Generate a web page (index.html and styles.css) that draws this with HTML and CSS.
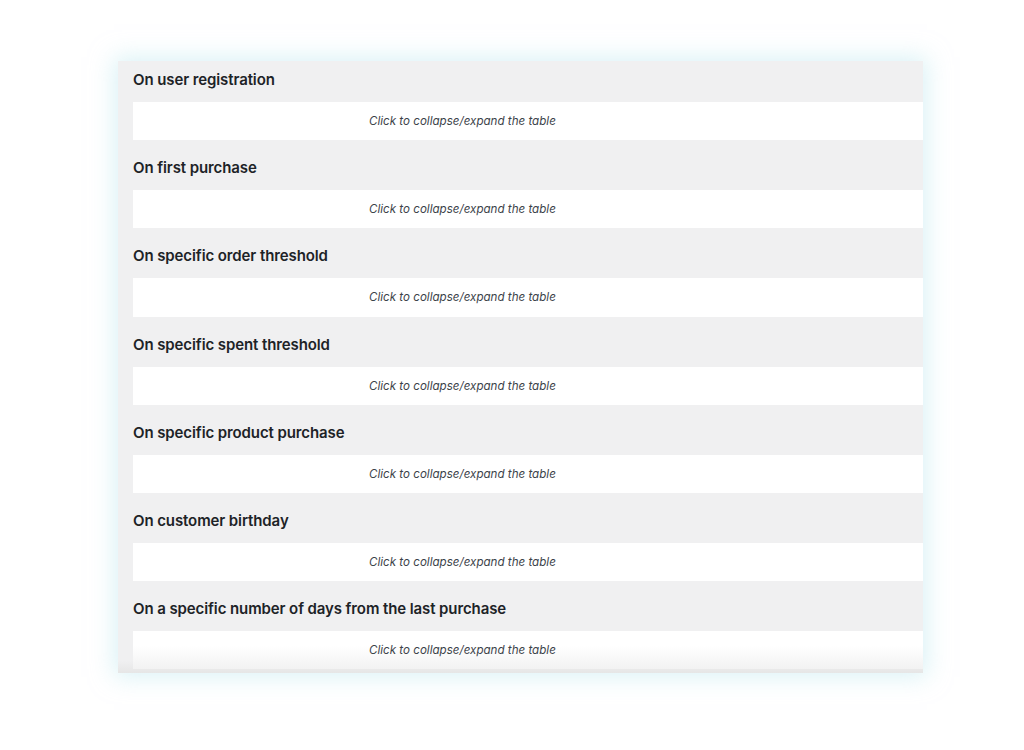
FILE: index.html
```html
<!DOCTYPE html>
<html lang="en">
<head>
<meta charset="utf-8">
<title>Rules</title>
<link rel="stylesheet" href="styles.css">
</head>
<body>
<div class="page">
  <div class="panel">
    <section class="rule">
      <h3 class="rule-title">On user registration</h3>
      <div class="toggle"><span class="toggle-text">Click to collapse/expand the table</span></div>
    </section>
    <section class="rule">
      <h3 class="rule-title">On first purchase</h3>
      <div class="toggle"><span class="toggle-text">Click to collapse/expand the table</span></div>
    </section>
    <section class="rule">
      <h3 class="rule-title">On specific order threshold</h3>
      <div class="toggle"><span class="toggle-text">Click to collapse/expand the table</span></div>
    </section>
    <section class="rule">
      <h3 class="rule-title">On specific spent threshold</h3>
      <div class="toggle"><span class="toggle-text">Click to collapse/expand the table</span></div>
    </section>
    <section class="rule">
      <h3 class="rule-title">On specific product purchase</h3>
      <div class="toggle"><span class="toggle-text">Click to collapse/expand the table</span></div>
    </section>
    <section class="rule">
      <h3 class="rule-title">On customer birthday</h3>
      <div class="toggle"><span class="toggle-text">Click to collapse/expand the table</span></div>
    </section>
    <section class="rule">
      <h3 class="rule-title">On a specific number of days from the last purchase</h3>
      <div class="toggle toggle-last"><span class="toggle-text">Click to collapse/expand the table</span></div>
    </section>
  </div>
</div>
</body>
</html>
```

FILE: styles.css
```css
html, body {
  margin: 0;
  padding: 0;
  background: #ffffff;
}

body {
  font-family: Inter, "Noto Sans", "Liberation Sans", sans-serif;
  width: 1024px;
  height: 750px;
  overflow: hidden;
}

.page {
  padding-top: 61px;
  padding-left: 118px;
}

.panel {
  width: 790px;
  padding-left: 15px;
  padding-bottom: 4px;
  background: linear-gradient(#f0f0f1 0%, #f0f0f1 98%, #e6e6e6 100%);
  box-shadow: 0 0 22px 4px rgba(190, 232, 238, 0.55);
  display: flex;
  flex-direction: column;
  gap: 9px;
}

.rule {
  display: flex;
  flex-direction: column;
}

.rule-title {
  margin: 0;
  height: 41px;
  box-sizing: border-box;
  padding-top: 9px;
  font-size: 15px;
  line-height: 20px;
  font-weight: 600;
  color: #1d2327;
  letter-spacing: -0.1px;
}

.toggle {
  height: 38.2px;
  background: #ffffff;
  display: flex;
  align-items: center;
  padding-left: 236px;
}

.toggle-last {
  background: linear-gradient(#ffffff 0%, #ffffff 40%, #f2f2f2 100%);
}

.toggle-text {
  font-size: 11.6px;
  font-style: italic;
  color: #3c434a;
}
```
